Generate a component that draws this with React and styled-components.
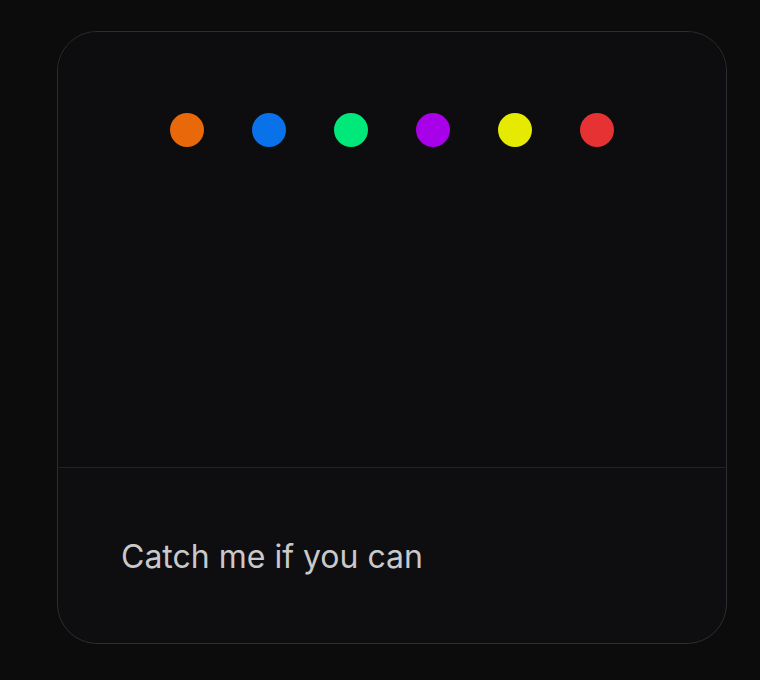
import React from "react";
import styled, { createGlobalStyle } from "styled-components";

const GlobalStyle = createGlobalStyle`
  html, body {
    margin: 0;
    padding: 0;
    background: #0c0c0d;
  }
  body {
    font-family: Inter, "Noto Sans", sans-serif;
  }
`;

// full page, card sits in the middle
const Page = styled.div`
  width: 760px;
  height: 680px;
  box-sizing: border-box;
  padding: 31px 0 0 57px;
`;

const Card = styled.div`
  width: 670px;
  height: 613px;
  box-sizing: border-box;
  border: 1.5px solid #2e2e30;
  border-radius: 40px;
  background: #0e0e10;
  display: flex;
  flex-direction: column;
  overflow: hidden;
`;

const Stage = styled.div`
  height: 436px;
  border-bottom: 1px solid #222224;
  display: flex;
  justify-content: center;
  padding-top: 81px;
  box-sizing: border-box;
  background: #0d0d0f;
`;

const DotRow = styled.div`
  display: flex;
  gap: 48px;
  height: 34px;
`;

const Dot = styled.span`
  width: 34px;
  height: 34px;
  border-radius: 50%;
  background: ${(p) => p.$color};
`;

const Footer = styled.div`
  flex: 1;
  display: flex;
  align-items: center;
  padding: 3px 0 0 63px;
`;

const Caption = styled.p`
  margin: 0;
  font-size: 32px;
  line-height: 1.2;
  font-weight: 400;
  color: #c9c9cb;
`;

const colors = ["#e8680a", "#0a72e8", "#00e87a", "#a800e8", "#e6ea00", "#e63232"];

export default function App() {
  return (
    <>
      <GlobalStyle />
      <Page>
        <Card>
          <Stage>
            <DotRow>
              {colors.map((c) => (
                <Dot key={c} $color={c} />
              ))}
            </DotRow>
          </Stage>
          <Footer>
            <Caption>Catch me if you can</Caption>
          </Footer>
        </Card>
      </Page>
    </>
  );
}
